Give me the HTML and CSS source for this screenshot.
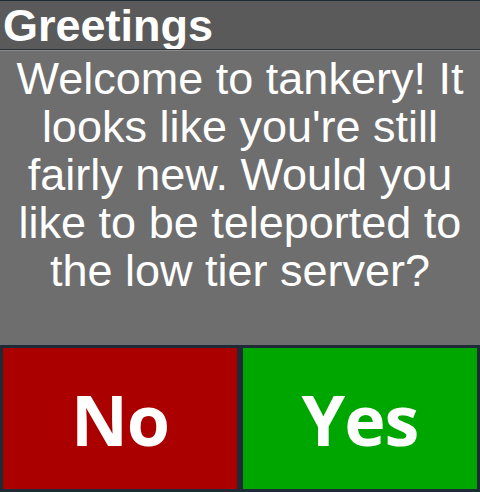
FILE: index.html
```html
<!DOCTYPE html>
<html lang="en">
<head>
<meta charset="utf-8">
<title>Greetings</title>
<link rel="stylesheet" href="styles.css">
</head>
<body>
<div class="dialog">
  <div class="dialog-header">Greetings</div>
  <div class="dialog-body">
    <p class="message">Welcome to tankery! It looks like you're still fairly new. Would you like to be teleported to the low tier server?</p>
  </div>
  <div class="dialog-actions">
    <button class="action action-no">No</button>
    <button class="action action-yes">Yes</button>
  </div>
</div>
</body>
</html>
```
FILE: styles.css
```css
html, body {
  margin: 0;
  padding: 0;
  width: 480px;
  height: 492px;
  overflow: hidden;
  background: #1e2a35;
}

.dialog {
  display: flex;
  flex-direction: column;
  width: 480px;
  height: 492px;
}

.dialog-header {
  margin-top: 1px;
  height: 49px;
  box-sizing: border-box;
  background: #5a5a5a;
  border-bottom: 1px solid #2b3137;
  color: #fff;
  font-family: "Liberation Sans", Arial, sans-serif;
  font-weight: bold;
  font-size: 45px;
  line-height: 50px;
  padding-left: 3px;
  white-space: nowrap;
  overflow: hidden;
}

.dialog-body {
  height: 295px;
  background: #6e6e6e;
  border-top: 1px solid #8a8a8a;
  box-sizing: border-box;
}

.message {
  margin: 0;
  padding-top: 4px;
  color: #fff;
  font-family: "Liberation Sans", Arial, sans-serif;
  font-size: 45px;
  line-height: 48px;
  text-align: center;
}

.dialog-actions {
  flex: 1;
  display: grid;
  grid-template-columns: 1fr 1fr;
  gap: 6px;
  padding: 3px;
}

.action {
  border: none;
  margin: 0;
  padding: 0;
  color: #fff;
  font-family: "Open Sans", "Noto Sans", sans-serif;
  font-weight: bold;
  font-size: 70px;
  letter-spacing: -1px;
  cursor: pointer;
}

.action-no {
  background: #aa0000;
}

.action-yes {
  background: #00a600;
}
```
